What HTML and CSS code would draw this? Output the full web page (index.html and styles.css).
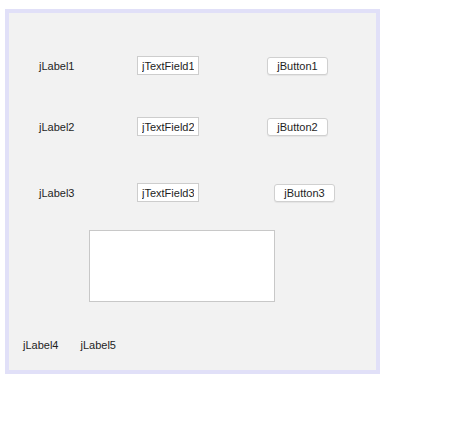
FILE: index.html
```html
<!DOCTYPE html>
<html lang="en">
<head>
    <meta charset="UTF-8">
    <meta name="viewport" content="width=device-width, initial-scale=1.0">
    <title>NewJFrame</title>
    <link rel="stylesheet" href="styles.css">
</head>
<body>
    <div class="frame">
        <div class="row row-first">
            <span class="label">jLabel1</span>
            <input type="text" class="field" value="jTextField1">
            <button class="btn">jButton1</button>
        </div>
        <div class="row row-second">
            <span class="label">jLabel2</span>
            <input type="text" class="field" value="jTextField2">
            <button class="btn">jButton2</button>
        </div>
        <div class="row row-third">
            <span class="label">jLabel3</span>
            <input type="text" class="field" value="jTextField3">
            <button class="btn btn-wide-gap">jButton3</button>
        </div>
        <textarea class="area"></textarea>
        <div class="footer">
            <span class="label-small">jLabel4</span>
            <span class="label-small">jLabel5</span>
        </div>
    </div>
</body>
</html>
```

FILE: styles.css
```css
* {
    margin: 0;
    padding: 0;
    box-sizing: border-box;
}

body {
    font-family: 'Liberation Sans', Arial, sans-serif;
    font-size: 11px;
    color: #1e1e1e;
    background-color: #fff;
}

.frame {
    margin: 9px 0 0 5px;
    width: 375px;
    height: 365px;
    border: 4px solid #e1e0f8;
    background-color: #f2f2f2;
    display: flex;
    flex-direction: column;
    align-items: flex-start;
}

.row {
    display: flex;
    align-items: center;
    height: 19px;
    padding-left: 30px;
}

.row-first {
    margin-top: 43px;
}

.row-second {
    margin-top: 42px;
}

.row-third {
    margin-top: 47px;
}

.label {
    width: 98px;
}

.field {
    width: 62px;
    height: 19px;
    border: 1px solid #cdcdcd;
    background-color: #fff;
    font-family: inherit;
    font-size: 11px;
    color: #1e1e1e;
    padding: 0 4px;
}

.btn {
    width: 61px;
    height: 18px;
    margin-left: 68px;
    border: 1px solid #d0d0d0;
    border-radius: 3px;
    background-color: #fff;
    font-family: inherit;
    font-size: 11px;
    color: #1e1e1e;
    box-shadow: 0 1px 1px rgba(0, 0, 0, 0.06);
}

.btn-wide-gap {
    margin-left: 75px;
}

.area {
    margin: 28px 0 0 80px;
    width: 186px;
    height: 72px;
    border: 1px solid #c8c8c8;
    background-color: #fff;
    resize: none;
}

.footer {
    display: flex;
    gap: 22px;
    margin: 36px 0 0 14px;
    line-height: 14px;
}
```
